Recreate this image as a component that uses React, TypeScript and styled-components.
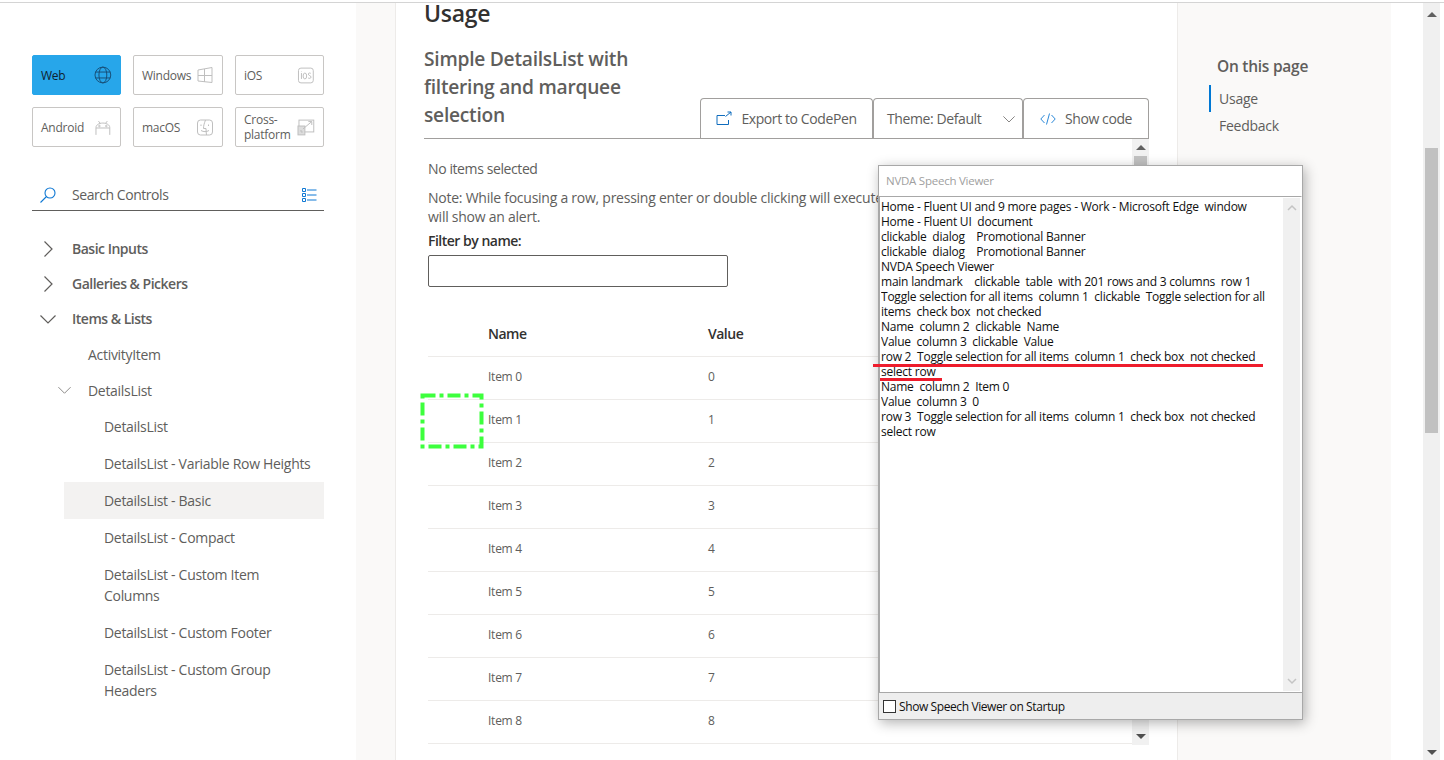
import React from "react";
import styled, { createGlobalStyle } from "styled-components";

const FONT = `"Open Sans", "Noto Sans", "Liberation Sans", sans-serif`;

const GlobalStyle = createGlobalStyle`
  html, body {
    margin: 0;
    padding: 0;
    background: #ffffff;
    overflow: hidden;
  }
  * {
    box-sizing: border-box;
  }
`;

const platforms = [
  { name: "Web", icon: "web" },
  { name: "Windows", icon: "windows" },
  { name: "iOS", icon: "ios" },
  { name: "Android", icon: "android" },
  { name: "macOS", icon: "macos" },
  { name: "Cross-platform", icon: "cross" },
];

const treeItems = [
  { label: "Basic Inputs", level: 0, chevron: "right", height: 35 },
  { label: "Galleries & Pickers", level: 0, chevron: "right", height: 35 },
  { label: "Items & Lists", level: 0, chevron: "down", height: 35 },
  { label: "ActivityItem", level: 1, height: 36 },
  { label: "DetailsList", level: 1, chevron: "down", height: 36 },
  { label: "DetailsList", level: 2, height: 37 },
  { label: "DetailsList - Variable Row Heights", level: 2, height: 37 },
  { label: "DetailsList - Basic", level: 2, height: 37, selected: true },
  { label: "DetailsList - Compact", level: 2, height: 37 },
  { label: "DetailsList - Custom Item Columns", level: 2, height: 37 },
  { label: "DetailsList - Custom Footer", level: 2, height: 37 },
  { label: "DetailsList - Custom Group Headers", level: 2, height: 37 },
];

const speechLines = [
  "Home - Fluent UI and 9 more pages - Work - Microsoft Edge  window",
  "Home - Fluent UI  document",
  "clickable  dialog    Promotional Banner",
  "clickable  dialog    Promotional Banner",
  "NVDA Speech Viewer",
  "main landmark    clickable  table  with 201 rows and 3 columns  row 1",
  "Toggle selection for all items  column 1  clickable  Toggle selection for all",
  "items  check box  not checked",
  "Name  column 2  clickable  Name",
  "Value  column 3  clickable  Value",
  "row 2  Toggle selection for all items  column 1  check box  not checked",
  "select row",
  "Name  column 2  Item 0",
  "Value  column 3  0",
  "row 3  Toggle selection for all items  column 1  check box  not checked",
  "select row",
];

const PlatformIcon = ({ kind, color }: { kind: string; color: string }) => (
  <svg width="18" height="18" viewBox="0 0 18 18" fill="none" stroke={color} strokeWidth="1">
    {kind === "web" && (
      <>
        <circle cx="9" cy="9" r="8" />
        <ellipse cx="9" cy="9" rx="4" ry="8" />
        <path d="M1.500 6h15M1.500 12h15" />
      </>
    )}
    {kind === "windows" && <path d="M2 4l14-2.500v15L2 15V4zM2 9.500h14M8.500 3v13" />}
    {kind === "ios" && (
      <>
        <rect x="1.500" y="2" width="15" height="15" rx="2.500" />
        <path d="M4.500 7v6M4.500 5.500v.5" />
        <ellipse cx="8" cy="10" rx="1.800" ry="3" />
        <path d="M14 7.500c-.5-.8-2.500-.8-2.500.6 0 1.800 2.700 1.200 2.700 3.100 0 1.500-2.300 1.500-3 .6" />
      </>
    )}
    {kind === "android" && (
      <>
        <path d="M2 17V9.500c0-2.500 3-4.500 7-4.500s7 2 7 4.500V17M2 10h14" />
        <path d="M4.500 3l2 2.500M13.500 3l-2 2.500" />
        <circle cx="5.500" cy="8" r=".8" />
        <circle cx="12.500" cy="8" r=".8" />
      </>
    )}
    {kind === "macos" && (
      <>
        <rect x="1.500" y="2" width="15" height="15" rx="3" />
        <path d="M9.500 2c-1.500 4-2 6-2 8.500H10c0 2 .2 4 .5 6.500" />
        <path d="M5 6.500v1.500M12.500 6.500v1.500M5 12.500c2.500 1.500 5.500 1.500 8 0" />
      </>
    )}
    {kind === "cross" && (
      <>
        <rect x="2" y="2" width="15" height="12" />
        <rect x="1" y="8" width="7" height="9" fill="#dddddd" />
        <path d="M6 11l9-7.500M11.500 3.500H15V7M3 13h2v2" />
      </>
    )}
  </svg>
);

const Chevron = ({ direction, size, color }: { direction: string; size: number; color: string }) => (
  <svg width={size} height={size} viewBox="0 0 16 16" fill="none" stroke={color} strokeWidth={size > 12 ? 1.2 : 1}>
    {direction === "right" ? <path d="M4.500 0.500L12 8l-7.500 7.500" /> : <path d="M0.500 4.500L8 12l7.500-7.500" />}
  </svg>
);

const App = () => {
  return (
    <Page>
      <GlobalStyle />
      <TopLine />
      <Body>
        <Nav>
          <PlatformGrid>
            {platforms.map((p) => (
              <PlatformTile key={p.name} $active={p.name === "Web"}>
                <TileLabel>{p.name}</TileLabel>
                <PlatformIcon kind={p.icon} color={p.name === "Web" ? "#174f78" : "#bfbfbf"} />
              </PlatformTile>
            ))}
          </PlatformGrid>
          <SearchBox>
            <svg width="16" height="16" viewBox="0 0 16 16" fill="none" stroke="#0f78d4" strokeWidth="1.100">
              <circle cx="10" cy="6" r="5" />
              <path d="M6.500 9.500L0.500 15.500" />
            </svg>
            <SearchText>Search Controls</SearchText>
            <svg width="16" height="16" viewBox="0 0 16 16" fill="none" stroke="#0f78d4" strokeWidth="1">
              <path d="M1.500 1.500h3v3h-3zM1.500 6.500h3v3h-3zM1.500 11.500h3v3h-3zM6 3h9.500M6 8h9.500M6 13h9.500" />
            </svg>
          </SearchBox>
          <Tree>
            {treeItems.map((item, idx) => (
              <TreeRow key={idx} $level={item.level} $height={item.height} $selected={!!item.selected}>
                {item.chevron && (
                  <ChevronSlot $level={item.level}>
                    <Chevron
                      direction={item.chevron}
                      size={item.level === 0 ? 16 : 13}
                      color={item.level === 0 ? "#605e5c" : "#8a8886"}
                    />
                  </ChevronSlot>
                )}
                {item.label}
              </TreeRow>
            ))}
          </Tree>
        </Nav>

        <Gutter />

        <MainCard>
          <UsageHeading>Usage</UsageHeading>
          <ExampleHeader>
            <ExampleTitle>Simple DetailsList with filtering and marquee selection</ExampleTitle>
            <HeaderTabs>
              <HeaderTab $width={173}>
                <svg width="16" height="16" viewBox="0 0 16 16" fill="none" stroke="#0f6cbd" strokeWidth="1">
                  <path d="M9 4.500H1v9h11.500V9M9.500 5.500L15 1M11.500 1H15v3.500" />
                </svg>
                Export to CodePen
              </HeaderTab>
              <ThemeTab>
                Theme: Default
                <Chevron direction="down" size={12} color="#605e5c" />
              </ThemeTab>
              <HeaderTab $width={126}>
                <svg width="16" height="16" viewBox="0 0 16 16" fill="none" stroke="#2b88d8" strokeWidth="1">
                  <path d="M4.500 4L0.800 8l3.700 4M11.500 4l3.700 4-3.700 4M9.500 2.500l-3 11" />
                </svg>
                Show code
              </HeaderTab>
            </HeaderTabs>
          </ExampleHeader>

          <ExampleBody>
            <ExampleContent>
              <SelectionNote>No items selected</SelectionNote>
              <InvokeNote>
                Note: While focusing a row, pressing enter or double clicking will execute onItemInvoked, which in this
                example will show an alert.
              </InvokeNote>
              <FilterLabel>Filter by name:</FilterLabel>
              <FilterInput />
              <TableHead>
                <NameCell $strong>Name</NameCell>
                <ValueCell $strong>Value</ValueCell>
              </TableHead>
              {Array.from({ length: 9 }, (_, i) => (
                <TableRow key={i}>
                  <NameCell>Item {i}</NameCell>
                  <ValueCell>{i}</ValueCell>
                </TableRow>
              ))}
            </ExampleContent>
            <InnerScrollbar>
              <ArrowUp />
              <InnerThumb />
              <ScrollSpacer />
              <ArrowDown />
            </InnerScrollbar>
          </ExampleBody>
        </MainCard>

        <Rail>
          <RailTitle>On this page</RailTitle>
          <RailLink $active>Usage</RailLink>
          <RailLink>Feedback</RailLink>
        </Rail>

        <RightBlank />

        <PageScrollbar>
          <ArrowUp />
          <PageThumb />
          <ScrollSpacer />
          <ArrowDown />
        </PageScrollbar>
      </Body>

      <SpeechViewer>
        <ViewerTitle>NVDA Speech Viewer</ViewerTitle>
        <ViewerPane>
          <ViewerText>
            {speechLines.map((line, idx) => (
              <div key={idx}>{line}</div>
            ))}
          </ViewerText>
          <ViewerScrollbar>
            <svg width="10" height="8" viewBox="0 0 10 8" fill="none" stroke="#c4c4c4" strokeWidth="1.500">
              <path d="M1 6l4-4 4 4" />
            </svg>
            <svg width="10" height="8" viewBox="0 0 10 8" fill="none" stroke="#c4c4c4" strokeWidth="1.500">
              <path d="M1 2l4 4 4-4" />
            </svg>
          </ViewerScrollbar>
        </ViewerPane>
        <ViewerFooter>
          <ViewerCheck />
          Show Speech Viewer on Startup
        </ViewerFooter>
      </SpeechViewer>

      <RedUnderline $left={873} $top={364} $width={390} />
      <RedUnderline $left={880} $top={378} $width={62} />

      <FocusMark width="64" height="56" viewBox="0 0 64 56" fill="none">
        <rect x="2.500" y="2.500" width="59" height="51" stroke="#3dff3d" strokeWidth="4" strokeDasharray="13 4 4 4" />
      </FocusMark>
    </Page>
  );
};

export default App;

const Page = styled.div`
  position: relative;
  width: 1444px;
  height: 760px;
  overflow: hidden;
  display: flex;
  flex-direction: column;
  background: #ffffff;
  font-family: ${FONT};
  letter-spacing: -0.25px;
  color: #605e5c;
`;

const TopLine = styled.div`
  flex: none;
  height: 3px;
  border-top: 2px solid #ffffff;
  background: #d4d4d4;
`;

const Body = styled.div`
  flex: 1;
  display: flex;
  min-height: 0;
`;

const Nav = styled.nav`
  flex: none;
  width: 356px;
  padding: 52px 32px 0;
  background: #ffffff;
`;

const PlatformGrid = styled.div`
  display: grid;
  grid-template-columns: 89px 90px 89px;
  grid-auto-rows: 40px;
  gap: 12px;
`;

const PlatformTile = styled.div<{ $active: boolean }>`
  display: flex;
  align-items: center;
  justify-content: space-between;
  padding: 0 8px;
  border: 1px solid ${(p) => (p.$active ? "#27a6ea" : "#c8c6c4")};
  border-radius: 2px;
  background: ${(p) => (p.$active ? "#27a6ea" : "#ffffff")};
  color: ${(p) => (p.$active ? "#10222e" : "#605e5c")};
`;

const TileLabel = styled.span`
  font-size: 12px;
  line-height: 15px;
  width: 54px;
`;

const SearchBox = styled.div`
  display: flex;
  align-items: center;
  height: 31px;
  margin-top: 33px;
  padding: 0 7px 0 8px;
  border-bottom: 1px solid #605e5c;
`;

const SearchText = styled.span`
  flex: 1;
  margin-left: 16px;
  padding-bottom: 2px;
  font-size: 14px;
  letter-spacing: -0.45px;
  color: #605e5c;
`;

const Tree = styled.div`
  margin-top: 20px;
  display: flex;
  flex-direction: column;
`;

const TreeRow = styled.div<{ $level: number; $height: number; $selected: boolean }>`
  position: relative;
  min-height: ${(p) => p.$height}px;
  display: flex;
  align-items: center;
  margin-left: ${(p) => (p.$level === 2 ? 32 : 0)}px;
  padding: ${(p) => (p.$height - 21) / 2}px 8px;
  padding-left: ${(p) => (p.$level === 0 ? 40 : p.$level === 1 ? 56 : 40)}px;
  font-size: 14px;
  line-height: 21px;
  letter-spacing: ${(p) => (p.$level === 0 ? -0.5 : -0.3)}px;
  font-weight: ${(p) => (p.$level === 0 ? 600 : 400)};
  color: #605e5c;
  background: ${(p) => (p.$selected ? "#f3f2f1" : "transparent")};
`;

const ChevronSlot = styled.span<{ $level: number }>`
  position: absolute;
  left: ${(p) => (p.$level === 0 ? 8 : 26)}px;
  top: 50%;
  transform: translateY(-50%);
  display: flex;
`;

const Gutter = styled.div`
  flex: none;
  width: 39px;
  background: #faf9f8;
`;

const MainCard = styled.main`
  flex: none;
  width: 783px;
  padding: 0 28px;
  border-left: 1px solid #edebe9;
  border-right: 1px solid #edebe9;
  background: #ffffff;
`;

const UsageHeading = styled.h2`
  margin: 0 0 22px;
  font-size: 23px;
  line-height: 20px;
  font-weight: 600;
  color: #323130;
`;

const ExampleHeader = styled.div`
  display: flex;
  justify-content: space-between;
  align-items: flex-end;
  height: 94px;
  border-bottom: 1px solid #a19f9d;
`;

const ExampleTitle = styled.h3`
  margin: 0;
  width: 250px;
  padding-bottom: 9px;
  font-size: 19.200px;
  line-height: 28px;
  font-weight: 600;
  color: #605e5c;
`;

const HeaderTabs = styled.div`
  display: flex;
  height: 40px;
`;

const HeaderTab = styled.div<{ $width: number }>`
  width: ${(p) => p.$width}px;
  display: flex;
  align-items: center;
  justify-content: center;
  gap: 9px;
  border: 1px solid #a19f9d;
  border-bottom: none;
  border-radius: 4px 4px 0 0;
  font-size: 14px;
  letter-spacing: -0.4px;
  color: #605e5c;
`;

const ThemeTab = styled(HeaderTab).attrs({ $width: 150 })`
  justify-content: space-between;
  padding: 0 7px 0 13px;
`;

const ExampleBody = styled.div`
  display: flex;
  height: 606px;
`;

const ExampleContent = styled.div`
  flex: 1;
  min-width: 0;
  padding: 20px 0 0 4px;
  font-size: 14px;
`;

const SelectionNote = styled.div`
  line-height: 20px;
  letter-spacing: -0.4px;
`;

const InvokeNote = styled.div`
  margin-top: 9px;
  line-height: 19px;
`;

const FilterLabel = styled.div`
  margin-top: 5px;
  line-height: 20px;
  font-weight: 600;
  letter-spacing: -0.5px;
  color: #323130;
`;

const FilterInput = styled.div`
  width: 300px;
  height: 32px;
  margin-top: 4px;
  border: 1px solid #605e5c;
  border-radius: 2px;
`;

const TableHead = styled.div`
  display: flex;
  align-items: center;
  height: 45px;
  margin-top: 25px;
  border-bottom: 1px solid #edebe9;
`;

const TableRow = styled.div`
  display: flex;
  align-items: center;
  height: 43px;
  border-bottom: 1px solid #edebe9;
`;

const NameCell = styled.div<{ $strong?: boolean }>`
  width: 220px;
  margin-left: 60px;
  padding-bottom: ${(p) => (p.$strong ? 1 : 3)}px;
  font-size: ${(p) => (p.$strong ? 14 : 12)}px;
  font-weight: ${(p) => (p.$strong ? 600 : 400)};
  letter-spacing: ${(p) => (p.$strong ? -0.5 : -0.25)}px;
  color: ${(p) => (p.$strong ? "#323130" : "#605e5c")};
`;

const ValueCell = styled.div<{ $strong?: boolean }>`
  padding-bottom: ${(p) => (p.$strong ? 1 : 3)}px;
  font-size: ${(p) => (p.$strong ? 14 : 12)}px;
  font-weight: ${(p) => (p.$strong ? 600 : 400)};
  letter-spacing: ${(p) => (p.$strong ? -0.5 : -0.25)}px;
  color: ${(p) => (p.$strong ? "#323130" : "#605e5c")};
`;

const InnerScrollbar = styled.div`
  flex: none;
  width: 17px;
  display: flex;
  flex-direction: column;
  align-items: center;
  padding: 6px 0;
  background: #f1f1f1;
`;

const ArrowUp = styled.div`
  flex: none;
  width: 0;
  height: 0;
  border-left: 5px solid transparent;
  border-right: 5px solid transparent;
  border-bottom: 5px solid #606060;
`;

const ArrowDown = styled.div`
  flex: none;
  width: 0;
  height: 0;
  border-left: 5px solid transparent;
  border-right: 5px solid transparent;
  border-top: 5px solid #505050;
`;

const InnerThumb = styled.div`
  flex: none;
  width: 13px;
  height: 130px;
  margin-top: 6px;
  background: #c1c1c1;
`;

const ScrollSpacer = styled.div`
  flex: 1;
`;

const Rail = styled.aside`
  flex: none;
  width: 213px;
  padding: 52px 0 0 31px;
  background: #faf9f8;
`;

const RailTitle = styled.div`
  margin-left: 8px;
  margin-bottom: 8px;
  font-size: 15.500px;
  line-height: 22px;
  font-weight: 600;
  color: #605e5c;
`;

const RailLink = styled.div<{ $active?: boolean }>`
  height: 27px;
  padding-left: 8px;
  border-left: 2px solid ${(p) => (p.$active ? "#0078d4" : "transparent")};
  font-size: 14px;
  line-height: 27px;
  color: #605e5c;
`;

const RightBlank = styled.div`
  flex: none;
  width: 32px;
  background: #ffffff;
`;

const PageScrollbar = styled.div`
  flex: none;
  width: 17px;
  display: flex;
  flex-direction: column;
  align-items: center;
  padding: 9px 0 5px;
  background: #f0f0f0;
`;

const PageThumb = styled.div`
  flex: none;
  width: 13px;
  height: 285px;
  margin-top: 131px;
  background: #c1c1c1;
`;

const SpeechViewer = styled.section`
  position: absolute;
  left: 878px;
  top: 165px;
  width: 425px;
  height: 555px;
  display: flex;
  flex-direction: column;
  border: 1px solid #a8a8a8;
  background: #ffffff;
  box-shadow: 2px 3px 12px rgba(0, 0, 0, 0.3);
`;

const ViewerTitle = styled.div`
  flex: none;
  height: 30px;
  padding-left: 7px;
  font-size: 11.500px;
  line-height: 30px;
  color: #a0a0a0;
`;

const ViewerPane = styled.div`
  flex: 1;
  min-height: 0;
  display: flex;
  padding: 1px;
  border-top: 1px solid #a8a8a8;
  border-left: 1px solid #a8a8a8;
  border-right: 1px solid #ffffff;
`;

const ViewerText = styled.div`
  flex: 1;
  padding-top: 1px;
  font-size: 12px;
  line-height: 15px;
  letter-spacing: -0.23px;
  white-space: pre;
  color: #101010;
  overflow: hidden;
`;

const ViewerScrollbar = styled.div`
  flex: none;
  width: 17px;
  display: flex;
  flex-direction: column;
  align-items: center;
  justify-content: space-between;
  padding: 6px 0;
  background: #f0f0f0;
`;

const ViewerFooter = styled.div`
  flex: none;
  height: 27px;
  display: flex;
  align-items: center;
  gap: 3px;
  padding-left: 4px;
  border-top: 1px solid #a8a8a8;
  background: #eeeeee;
  font-size: 12px;
  letter-spacing: -0.4px;
  color: #101010;
`;

const ViewerCheck = styled.span`
  width: 13px;
  height: 13px;
  border: 1px solid #333333;
  background: #ffffff;
`;

const RedUnderline = styled.div<{ $left: number; $top: number; $width: number }>`
  position: absolute;
  left: ${(p) => p.$left}px;
  top: ${(p) => p.$top}px;
  width: ${(p) => p.$width}px;
  height: 3px;
  background: #ee1c2c;
`;

const FocusMark = styled.svg`
  position: absolute;
  left: 420px;
  top: 393px;
`;
